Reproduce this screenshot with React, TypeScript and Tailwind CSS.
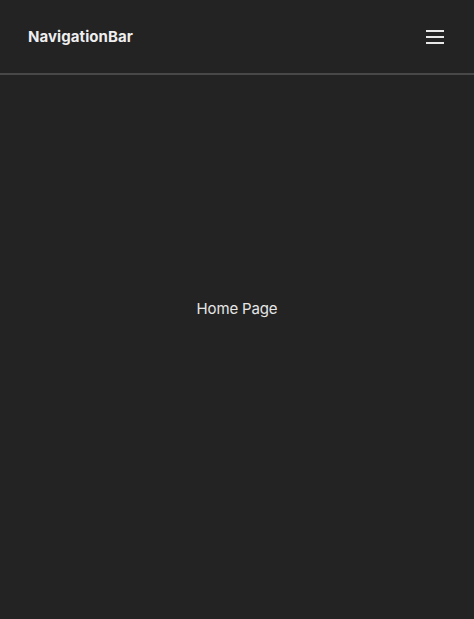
const App = () => {
  return (
    <div className="min-h-screen flex flex-col bg-[#232323] text-[#ececec]" style={{ fontFamily: 'Inter, "Noto Sans", sans-serif' }}>
      <nav className="h-[75px] flex items-center justify-between px-7 pt-[2px] border-b-2 border-[#484848]">
        <span className="text-[15px] font-bold tracking-[0.005em] text-[#eeeeee]">NavigationBar</span>
        <button className="w-[18px] flex flex-col gap-[4px] mr-[2px] -mt-[2px]">
          <span className="block h-[2px] bg-[#e8e8e8]" />
          <span className="block h-[2px] bg-[#e8e8e8]" />
          <span className="block h-[2px] bg-[#e8e8e8]" />
        </button>
      </nav>
      <main className="flex-1 flex items-center justify-center pb-[75px]">
        <p className="text-[15px] tracking-[-0.01em] text-[#e6e6e6]">Home Page</p>
      </main>
    </div>
  )
}

export default App
